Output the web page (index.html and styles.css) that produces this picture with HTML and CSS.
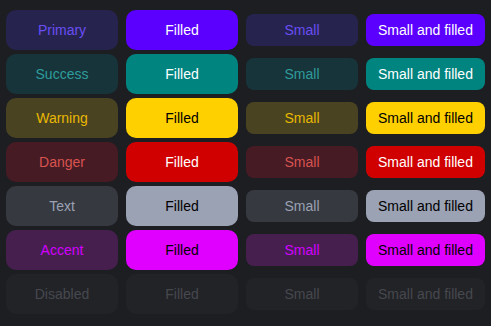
FILE: index.html
```html
<!DOCTYPE html>
<html lang="en">
  <head>
    <meta charset="UTF-8" />
    <meta name="viewport" content="width=device-width, initial-scale=1.0" />
    <title>Buttons</title>
    <link rel="stylesheet" href="styles.css">
  </head>
  <body>
    <!-- button grid: normal, filled, small, small + filled -->
    <div class="button-grid">
      <button class="btn primary">Primary</button>
      <button class="btn primary filled">Filled</button>
      <button class="btn small primary">Small</button>
      <button class="btn small primary filled">Small and filled</button>

      <button class="btn success">Success</button>
      <button class="btn success filled">Filled</button>
      <button class="btn small success">Small</button>
      <button class="btn small success filled">Small and filled</button>

      <button class="btn warning">Warning</button>
      <button class="btn warning filled">Filled</button>
      <button class="btn small warning">Small</button>
      <button class="btn small warning filled">Small and filled</button>

      <button class="btn danger">Danger</button>
      <button class="btn danger filled">Filled</button>
      <button class="btn small danger">Small</button>
      <button class="btn small danger filled">Small and filled</button>

      <button class="btn text">Text</button>
      <button class="btn text filled">Filled</button>
      <button class="btn small text">Small</button>
      <button class="btn small text filled">Small and filled</button>

      <button class="btn accent">Accent</button>
      <button class="btn accent filled">Filled</button>
      <button class="btn small accent">Small</button>
      <button class="btn small accent filled">Small and filled</button>

      <button class="btn disabled" disabled>Disabled</button>
      <button class="btn disabled filled" disabled>Filled</button>
      <button class="btn small disabled" disabled>Small</button>
      <button class="btn small disabled filled" disabled>Small and filled</button>
    </div>
  </body>
</html>
```

FILE: styles.css
```css
body {
  margin: 0;
  padding: 10px 6px 12px;
  background-color: #1d1e22;
  font-family: "Liberation Sans", Arial, sans-serif;
}
.button-grid {
  display: grid;
  grid-template-columns: 112px 112px 112px auto;
  grid-auto-rows: 40px;
  column-gap: 8px;
  row-gap: 4px;
  align-items: center;
  justify-content: start;
}
.btn {
  height: 40px;
  padding: 0 12px;
  border: none;
  border-radius: 10px;
  font-family: inherit;
  font-size: 14px;
  white-space: nowrap;
  cursor: pointer;
}
.btn.small {
  height: 32px;
  border-radius: 8px;
}
.primary { background-color: #26244f; color: #6a4df5; }
.primary.filled { background-color: #5b00ff; color: #ffffff; }
.success { background-color: #17343a; color: #2e9c9c; }
.success.filled { background-color: #00847f; color: #ffffff; }
.warning { background-color: #4a4322; color: #e8b800; }
.warning.filled { background-color: #ffd000; color: #000000; }
.danger { background-color: #461b24; color: #d9534f; }
.danger.filled { background-color: #d10000; color: #ffffff; }
.text { background-color: #363940; color: #9aa2b3; }
.text.filled { background-color: #9aa2b4; color: #000000; }
.accent { background-color: #461f4f; color: #d400ff; }
.accent.filled { background-color: #e000ff; color: #000000; }
.disabled,
.disabled.filled {
  background-color: #222327;
  color: #46484e;
  cursor: default;
}
```
